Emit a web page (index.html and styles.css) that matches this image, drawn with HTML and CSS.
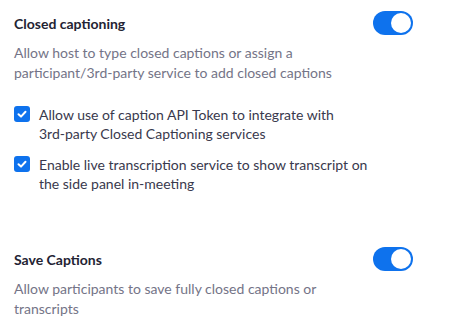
FILE: index.html
```html
<!DOCTYPE html>
<html>
<head>
<meta charset="utf-8">
<link rel="stylesheet" href="styles.css">
</head>
<body>
<div class="page">
  <section class="setting first">
    <div class="head">
      <div class="title">Closed captioning</div>
      <div class="toggle"><span class="knob"></span></div>
    </div>
    <div class="desc">Allow host to type closed captions or assign a participant/3rd-party service to add closed captions</div>
    <div class="options">
      <label class="opt"><span class="box"><svg viewBox="0 0 16 16" width="16" height="16"><path d="M4.5 8.3 L7 10.6 L11.5 5.8" fill="none" stroke="#fff" stroke-width="2" stroke-linecap="round" stroke-linejoin="round"/></svg></span><span class="opt-text">Allow use of caption API Token to integrate with <span class="nowrap">3rd-party</span> Closed Captioning services</span></label>
      <label class="opt"><span class="box"><svg viewBox="0 0 16 16" width="16" height="16"><path d="M4.5 8.3 L7 10.6 L11.5 5.8" fill="none" stroke="#fff" stroke-width="2" stroke-linecap="round" stroke-linejoin="round"/></svg></span><span class="opt-text">Enable live transcription service to show transcript on the side panel in-meeting</span></label>
    </div>
  </section>
  <section class="setting second">
    <div class="head">
      <div class="title">Save Captions</div>
      <div class="toggle"><span class="knob"></span></div>
    </div>
    <div class="desc">Allow participants to save fully closed captions or transcripts</div>
  </section>
</div>
</body>
</html>
```
FILE: styles.css
```css
html, body { margin: 0; padding: 0; background: #fff; }
body { font-family: Lato, "Open Sans", sans-serif; color: #232333; }
.page { width: 461px; padding: 0 14px; box-sizing: border-box; }
.setting { width: 399px; }
.first { padding-top: 11px; }
.second { padding-top: 54px; }
.head { display: flex; justify-content: space-between; align-items: center; height: 24px; }
.title { font-size: 14px; font-weight: bold; color: #232333; }
.toggle { width: 40px; height: 24px; border-radius: 12px; background: #0e72ed; position: relative; }
.knob { position: absolute; right: 2px; top: 2px; width: 20px; height: 20px; border-radius: 50%; background: #fff; }
.desc { font-size: 14px; line-height: 20px; color: #747487; margin-top: 8px; width: 330px; }
.options { margin-top: 22px; display: flex; flex-direction: column; gap: 12px; }
.opt { display: flex; align-items: flex-start; gap: 9px; }
.box { flex: none; width: 16px; height: 16px; border-radius: 3px; background: #0e72ed; margin-top: 1px; display: flex; }
.opt-text { font-size: 14px; line-height: 19px; color: #39394d; width: 330px; }
.nowrap { white-space: nowrap; }
```
